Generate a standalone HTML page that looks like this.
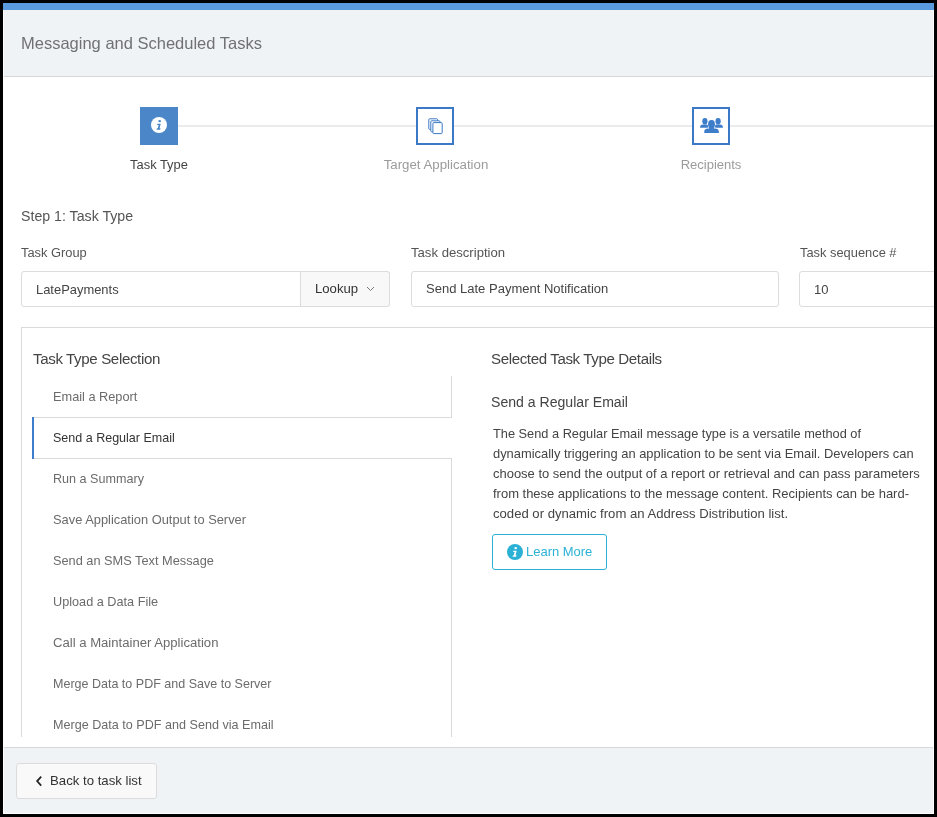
<!DOCTYPE html>
<html><head><meta charset="utf-8"><style>
html,body{margin:0;padding:0;}
body{width:937px;height:817px;background:#000;position:relative;overflow:hidden;font-family:"Liberation Sans", sans-serif;}
.t{position:absolute;white-space:nowrap;font-family:"Liberation Sans", sans-serif;-webkit-font-smoothing:antialiased;will-change:transform;}
.b{position:absolute;box-sizing:border-box;}
</style></head>
<body>

<div class="b" style="left:3px;top:3px;width:931px;height:811px;background:#fff;overflow:hidden;">
</div>
<div class="b" style="left:3px;top:3px;width:931px;height:7px;background:#5a9be0;"></div>
<div class="b" style="left:4px;top:10px;width:929px;height:67px;background:#f0f3f6;border-bottom:1px solid #d6d9dc;"></div>
<div class="b" style="left:4px;top:747px;width:929px;height:66px;background:#f0f3f6;border-top:1px solid #d6d9dc;"></div>
<!-- step line -->
<div class="b" style="left:178px;top:125px;width:756px;height:2px;background:#ebebeb;"></div>
<div class="b" style="left:140px;top:107px;width:38px;height:38px;background:#4a86c8;"></div>
<svg class="b" style="left:151px;top:117px;" width="16" height="16" viewBox="0 0 16 16">
 <circle cx="8" cy="8" r="8" fill="#fff"/>
 <ellipse cx="8.7" cy="4.2" rx="1.35" ry="1.15" fill="#4a86c8"/>
 <path d="M6.4 6.7 L9.7 6.7 L8.6 11.3 L9.5 11.3 L9.2 12.7 L5.6 12.7 L5.9 11.3 L6.8 11.3 L7.6 8.0 L6.1 8.0 Z" fill="#4a86c8"/>
</svg>
<div class="b" style="left:416px;top:107px;width:38px;height:38px;background:#fff;border:2px solid #3b79c6;"></div>
<svg class="b" style="left:416px;top:107px;" width="38" height="38" viewBox="416 107 38 38">
 <g fill="#fff" stroke="#3b79c6" stroke-width="1">
  <rect x="428.8" y="118.8" width="8.8" height="10.6" rx="0.9"/>
  <rect x="430.8" y="120.8" width="9.2" height="11" rx="0.9"/>
  <rect x="432.9" y="122.6" width="9.3" height="11" rx="0.9"/>
 </g>
</svg>
<div class="b" style="left:692px;top:107px;width:38px;height:38px;background:#fff;border:2px solid #3b79c6;"></div>
<svg class="b" style="left:692px;top:107px;" width="38" height="38" viewBox="692 107 38 38">
 <defs>
  <path id="cb" d="M704.3 132.9 L704.3 131.4 C704.3 129.6 705.8 128.5 708 128.4 L715.1 128.4 C717.3 128.5 718.8 129.6 718.8 131.4 L718.8 132.9 Z"/>
  <ellipse id="ch" cx="711.5" cy="124.3" rx="3.4" ry="4.3"/>
 </defs>
 <g fill="#3e7dca">
  <ellipse cx="704.9" cy="121.3" rx="2.6" ry="3.3"/>
  <path d="M700.1 127.8 L700.1 126.8 C700.1 125.3 701.3 124.5 703 124.4 L706.8 124.4 C708.5 124.5 709.6 125.3 709.6 126.8 L709.6 127.8 Z"/>
  <ellipse cx="718.1" cy="121.3" rx="2.6" ry="3.3"/>
  <path d="M713.4 127.8 L713.4 126.8 C713.4 125.3 714.5 124.5 716.2 124.4 L720 124.4 C721.7 124.5 722.9 125.3 722.9 126.8 L722.9 127.8 Z"/>
 </g>
 <g fill="#3e7dca" stroke="#fff" stroke-width="1.1"><use href="#cb"/><use href="#ch"/><rect x="709.2" y="126.5" width="4.6" height="2.6"/></g>
 <g fill="#3e7dca"><use href="#cb"/><use href="#ch"/><rect x="709.2" y="126.5" width="4.6" height="2.6"/></g>
</svg>
<!-- inputs -->
<div class="b" style="left:21px;top:271px;width:369px;height:36px;border:1px solid #dcdcdc;border-radius:3px;background:#fff;"></div>
<div class="b" style="left:300px;top:271px;width:90px;height:36px;border:1px solid #dcdcdc;border-radius:0 3px 3px 0;background:#f8f8f8;"></div>
<svg class="b" style="left:366px;top:286px;" width="9" height="6" viewBox="0 0 9 6"><path d="M1 1 L4.5 4.5 L8 1" fill="none" stroke="#777" stroke-width="1"/></svg>
<div class="b" style="left:411px;top:271px;width:368px;height:36px;border:1px solid #dcdcdc;border-radius:3px;background:#fff;"></div>
<div class="b" style="left:799px;top:271px;width:369px;height:36px;border:1px solid #dcdcdc;border-radius:3px;background:#fff;"></div>
<!-- panel -->
<div class="b" style="left:21px;top:327px;width:1000px;height:410px;border:1px solid #dadada;border-bottom:none;"></div>
<div class="b" style="left:451px;top:376px;width:1px;height:41px;background:#dadada;"></div>
<div class="b" style="left:451px;top:458px;width:1px;height:279px;background:#dadada;"></div>
<div class="b" style="left:32px;top:417px;width:420px;height:1px;background:#dadada;"></div>
<div class="b" style="left:32px;top:458px;width:420px;height:1px;background:#dadada;"></div>
<div class="b" style="left:32px;top:417px;width:2px;height:42px;background:#3d7dcb;"></div>
<!-- learn more -->
<div class="b" style="left:492px;top:534px;width:115px;height:36px;border:1px solid #2ab1d5;border-radius:3px;"></div>
<svg class="b" style="left:507px;top:544px;" width="16" height="16" viewBox="0 0 16 16">
 <circle cx="8" cy="8" r="8" fill="#2ab1d5"/>
 <ellipse cx="8.7" cy="4.2" rx="1.35" ry="1.15" fill="#fff"/>
 <path d="M6.4 6.7 L9.7 6.7 L8.6 11.3 L9.5 11.3 L9.2 12.7 L5.6 12.7 L5.9 11.3 L6.8 11.3 L7.6 8.0 L6.1 8.0 Z" fill="#fff"/>
</svg>
<!-- footer button -->
<div class="b" style="left:16px;top:763px;width:141px;height:36px;border:1px solid #dcdcdc;border-radius:3px;background:#f9f9f9;"></div>
<svg class="b" style="left:35px;top:775px;" width="8" height="12" viewBox="0 0 8 12"><path d="M6.2 1.6 L2.1 6.1 L6.2 10.6" fill="none" stroke="#222" stroke-width="1.7"/></svg>

<div class="t" style="left:21.2px;top:34.73px;font-size:16.5px;line-height:16.5px;color:#707174;">Messaging and Scheduled Tasks</div>
<div class="t" style="left:-40.599999999999994px;width:400px;text-align:center;top:158.67px;font-size:12.914px;line-height:12.914px;color:#444;">Task Type</div>
<div class="t" style="left:235.5px;width:400px;text-align:center;top:158.38px;font-size:13.255px;line-height:13.255px;color:#9b9b9b;">Target Application</div>
<div class="t" style="left:511.1px;width:400px;text-align:center;top:157.60px;font-size:13px;line-height:13px;color:#9b9b9b;">Recipients</div>
<div class="t" style="left:21px;top:208.99px;font-size:14.182px;line-height:14.182px;color:#555;">Step 1: Task Type</div>
<div class="t" style="left:21px;top:246.82px;font-size:12.854px;line-height:12.854px;color:#555;">Task Group</div>
<div class="t" style="left:410.9px;top:245.57px;font-size:13.145px;line-height:13.145px;color:#555;">Task description</div>
<div class="t" style="left:800.2px;top:247.11px;font-size:12.866px;line-height:12.866px;color:#555;">Task sequence #</div>
<div class="t" style="left:35.7px;top:284.05px;font-size:12.931px;line-height:12.931px;color:#444;">LatePayments</div>
<div class="t" style="left:315px;top:282.37px;font-size:13.153px;line-height:13.153px;color:#333;">Lookup</div>
<div class="t" style="left:425.7px;top:281.97px;font-size:13.03px;line-height:13.03px;color:#444;">Send Late Payment Notification</div>
<div class="t" style="left:814px;top:282.60px;font-size:13px;line-height:13px;color:#444;">10</div>
<div class="t" style="left:32.9px;top:350.92px;font-size:15.1px;line-height:15.1px;color:#444;letter-spacing:-0.37px;">Task Type Selection</div>
<div class="t" style="left:52.5px;top:391.00px;font-size:12.754px;line-height:12.754px;color:#6b6b6b;">Email a Report</div>
<div class="t" style="left:52.5px;top:432.20px;font-size:12.527px;line-height:12.527px;color:#333;">Send a Regular Email</div>
<div class="t" style="left:52.5px;top:473.13px;font-size:12.6px;line-height:12.6px;color:#6b6b6b;">Run a Summary</div>
<div class="t" style="left:52.5px;top:513.91px;font-size:12.861px;line-height:12.861px;color:#6b6b6b;">Save Application Output to Server</div>
<div class="t" style="left:52.5px;top:554.98px;font-size:12.785px;line-height:12.785px;color:#6b6b6b;">Send an SMS Text Message</div>
<div class="t" style="left:52.5px;top:596.05px;font-size:12.698px;line-height:12.698px;color:#6b6b6b;">Upload a Data File</div>
<div class="t" style="left:52.5px;top:635.80px;font-size:13.11px;line-height:13.11px;color:#6b6b6b;">Call a Maintainer Application</div>
<div class="t" style="left:52.5px;top:678.19px;font-size:12.531px;line-height:12.531px;color:#6b6b6b;">Merge Data to PDF and Save to Server</div>
<div class="t" style="left:52.5px;top:719.13px;font-size:12.6px;line-height:12.6px;color:#6b6b6b;">Merge Data to PDF and Send via Email</div>
<div class="t" style="left:491.2px;top:351.22px;font-size:15.1px;line-height:15.1px;color:#444;letter-spacing:-0.38px;">Selected Task Type Details</div>
<div class="t" style="left:491.2px;top:395.07px;font-size:14.099px;line-height:14.099px;color:#444;">Send a Regular Email</div>
<div class="t" style="left:492.8px;top:428.27px;font-size:12.792px;line-height:12.792px;color:#444;">The Send a Regular Email message type is a versatile method of</div>
<div class="t" style="left:492.8px;top:448.18px;font-size:12.9px;line-height:12.9px;color:#444;">dynamically triggering an application to be sent via Email. Developers can</div>
<div class="t" style="left:492.8px;top:466.81px;font-size:12.979px;line-height:12.979px;color:#444;">choose to send the output of a report or retrieval and can pass parameters</div>
<div class="t" style="left:492.8px;top:486.81px;font-size:12.981px;line-height:12.981px;color:#444;">from these applications to the message content. Recipients can be hard-</div>
<div class="t" style="left:492.8px;top:506.70px;font-size:13.11px;line-height:13.11px;color:#444;">coded or dynamic from an Address Distribution list.</div>
<div class="t" style="left:525.7px;top:544.81px;font-size:12.98px;line-height:12.98px;color:#2ab1d5;">Learn More</div>
<div class="t" style="left:50px;top:774.42px;font-size:13.203px;line-height:13.203px;color:#333;">Back to task list</div>
<div class="b" style="left:0;top:0;width:937px;height:3px;background:#000;"></div>
<div class="b" style="left:0;top:814px;width:937px;height:3px;background:#000;"></div>
<div class="b" style="left:0;top:0;width:3px;height:817px;background:#000;"></div>
<div class="b" style="left:934px;top:0;width:3px;height:817px;background:#000;"></div>
</body></html>
